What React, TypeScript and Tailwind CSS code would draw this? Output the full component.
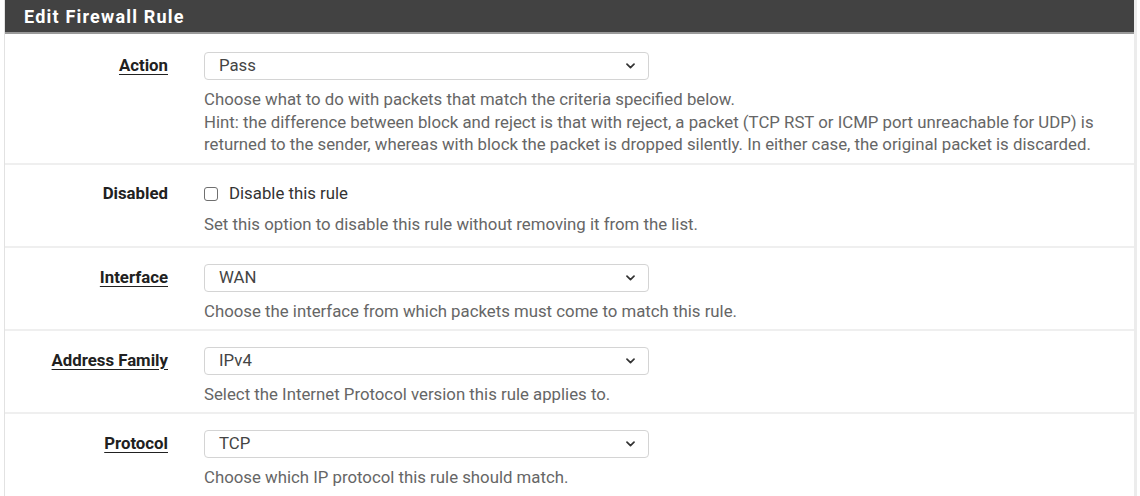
import React from "react";

type SelectRow = {
  label: string;
  value: string;
  help: string[];
};

function Chevron() {
  return (
    <svg width="9" height="6" viewBox="0 0 9 6" className="shrink-0">
      <path d="M1 1.2 L4.5 4.6 L8 1.2" fill="none" stroke="#333" strokeWidth="1.7" strokeLinecap="round" strokeLinejoin="round" />
    </svg>
  );
}

function FakeSelect({ value }: { value: string }) {
  return (
    <div className="flex h-[28px] w-[445px] items-center justify-between rounded-[4px] border border-[#d4d4d4] bg-white pl-[14px] pr-[13px] text-[16.8px] text-[#444]">
      <span>{value}</span>
      <Chevron />
    </div>
  );
}

function Label({ children, underline = true }: { children: React.ReactNode; underline?: boolean }) {
  return (
    <div className="flex h-[28px] w-[163px] shrink-0 items-center justify-end">
      <span className={`text-[16.8px] font-bold text-[#212121] ${underline ? "underline underline-offset-[3px]" : ""}`}>
        {children}
      </span>
    </div>
  );
}

export default function App() {
  const rows: SelectRow[] = [
    {
      label: "Interface",
      value: "WAN",
      help: ["Choose the interface from which packets must come to match this rule."],
    },
    {
      label: "Address Family",
      value: "IPv4",
      help: ["Select the Internet Protocol version this rule applies to."],
    },
    {
      label: "Protocol",
      value: "TCP",
      help: ["Choose which IP protocol this rule should match."],
    },
  ];

  return (
    <div className="flex h-[496px] w-full bg-white pl-[4px] font-['Roboto',sans-serif]">
      <div className="h-full w-[1130px] border-l border-[#e2e2e2]">
        {/* Header */}
        <div className="flex h-[34px] items-center border-b-2 border-[#9a9a9a] bg-[#424242] pl-[19px] text-[18px] font-bold tracking-[1.2px] text-white">
          Edit Firewall Rule
        </div>

        {/* Action */}
        <div className="flex gap-[36px] border-b-2 border-[#efefef] pb-[7px] pt-[18px]">
          <Label>Action</Label>
          <div>
            <FakeSelect value="Pass" />
            <div className="mt-[8px] text-[16.8px] leading-[22.5px] text-[#666]">
              <div>Choose what to do with packets that match the criteria specified below.</div>
              <div>
                Hint: the difference between block and reject is that with reject, a packet (TCP RST or ICMP port
                unreachable for UDP) is
              </div>
              <div>
                returned to the sender, whereas with block the packet is dropped silently. In either case, the original
                packet is discarded.
              </div>
            </div>
          </div>
        </div>

        {/* Disabled */}
        <div className="flex gap-[36px] border-b-2 border-[#efefef] pb-[11px] pt-[15px]">
          <Label underline={false}>Disabled</Label>
          <div>
            <label className="flex h-[28px] items-center gap-[11px] text-[16.8px] text-[#333]">
              <span className="h-[14px] w-[14px] rounded-[3px] border border-[#6f6f6f] bg-white" />
              Disable this rule
            </label>
            <div className="mt-[5px] text-[16.8px] leading-[22px] text-[#666]">
              Set this option to disable this rule without removing it from the list.
            </div>
          </div>
        </div>

        {rows.map((row, i) => (
          <div
            key={row.label}
            className={`flex gap-[36px] pb-[7px] pt-[16px] ${i < rows.length - 1 ? "border-b-2 border-[#efefef]" : ""}`}
          >
            <Label>{row.label}</Label>
            <div>
              <FakeSelect value={row.value} />
              <div className="mt-[8px] text-[16.8px] leading-[22px] text-[#666]">
                {row.help.map((h) => (
                  <div key={h}>{h}</div>
                ))}
              </div>
            </div>
          </div>
        ))}
      </div>
      <div className="h-full w-[3px] bg-[#ececec]" />
    </div>
  );
}
